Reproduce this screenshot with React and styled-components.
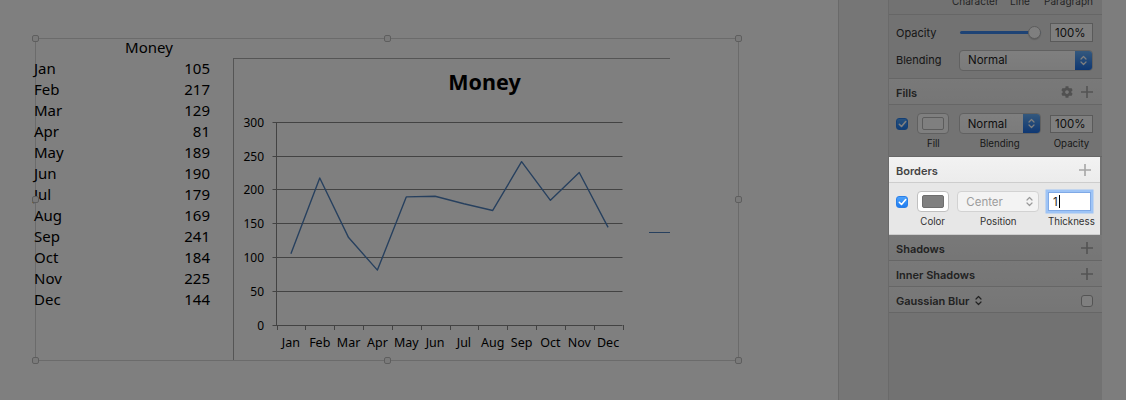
import React from "react";
import styled, { createGlobalStyle } from "styled-components";
import { FaCog } from "react-icons/fa";

const GlobalStyle = createGlobalStyle`
  html, body {
    margin: 0;
    padding: 0;
    overflow: hidden;
  }
  body {
    font-family: Inter, "Noto Sans", sans-serif;
  }
`;

const months = ["Jan", "Feb", "Mar", "Apr", "May", "Jun", "Jul", "Aug", "Sep", "Oct", "Nov", "Dec"];
const money = [105, 217, 129, 81, 189, 190, 179, 169, 241, 184, 225, 144];

const Screen = styled.div`
  display: flex;
  width: 1126px;
  height: 400px;
  overflow: hidden;
  background: #fff;
`;

/* ---------- canvas ---------- */

const Canvas = styled.div`
  flex: 0 0 839px;
  box-sizing: border-box;
  padding: 38px 0 0 35px;
  background: #fff;
  border-right: 1px solid #d4d4d4;
`;

const Frame = styled.div`
  position: relative;
  box-sizing: border-box;
  width: 704px;
  height: 323px;
  border: 1px solid #d6d6d6;
  display: flex;
  align-items: flex-start;
`;

const Handle = styled.span`
  position: absolute;
  width: 7px;
  height: 7px;
  box-sizing: border-box;
  border-radius: 2px;
  background: #f4f4f4;
  border: 1px solid #bdbdbd;
  left: ${(p) => (p.$x === "start" ? "-4px" : p.$x === "mid" ? "calc(50% - 3.5px)" : "auto")};
  right: ${(p) => (p.$x === "end" ? "-4px" : "auto")};
  top: ${(p) => (p.$y === "start" ? "-4px" : p.$y === "mid" ? "calc(50% - 3.5px)" : "auto")};
  bottom: ${(p) => (p.$y === "end" ? "-4px" : "auto")};
`;

const Sheet = styled.div`
  margin: -3px 0 0 -2px;
  width: 176px;
  display: grid;
  grid-template-columns: 54px 122px;
  grid-auto-rows: 21px;
  align-items: center;
  font-family: "Noto Sans", sans-serif;
  font-size: 15px;
  color: #000;
`;

const SheetHead = styled.div`
  grid-column: 2;
  text-align: center;
`;

const Cell = styled.div`
  text-align: ${(p) => (p.$num ? "right" : "left")};
  white-space: nowrap;
`;

const ChartBox = styled.div`
  margin: 19px 0 0 23px;
  align-self: stretch;
  box-sizing: border-box;
  width: 437px;
  border-top: 1px solid #aaaaaa;
  border-left: 1px solid #aaaaaa;
`;

const X0 = 42.5;
const X1 = 388.5;
const CW = (X1 - X0) / 12;
const yOf = (v) => 266 - (v * 203.3) / 300;

const LineChart = () => {
  const points = money.map((v, i) => `${X0 + (i + 0.5) * CW},${yOf(v)}`).join(" ");
  return (
    <svg width="436" height="302" viewBox="0 0 436 302" fontFamily="'Noto Sans', sans-serif">
      <text x="250.5" y="31" textAnchor="middle" fontSize="21.5" fontWeight="700" fill="#000">
        Money
      </text>
      {[0, 50, 100, 150, 200, 250, 300].map((v) => {
        const y = Math.round(yOf(v)) + 0.5;
        return (
          <g key={v}>
            <line x1={X0 - 4} x2={X1} y1={y} y2={y} stroke="#868686" strokeWidth="1" />
            <text x="30" y={y + 4.3} textAnchor="end" fontSize="12" fill="#000">
              {v}
            </text>
          </g>
        );
      })}
      <line x1={X0} x2={X0} y1={Math.round(yOf(300)) + 0.5} y2={266.5} stroke="#868686" />
      {Array.from({ length: 13 }, (_, i) => {
        const x = Math.round(X0 + i * CW) + 0.5;
        return <line key={i} x1={x} x2={x} y1="266" y2="271" stroke="#868686" />;
      })}
      {months.map((m, i) => (
        <text key={m} x={X0 + (i + 0.5) * CW} y="287.5" textAnchor="middle" fontSize="12.5" fill="#000">
          {m}
        </text>
      ))}
      <polyline points={points} fill="none" stroke="#4f81bd" strokeWidth="1.4" strokeLinejoin="round" />
      <line x1="415" x2="436" y1="173.5" y2="173.5" stroke="#4f81bd" strokeWidth="1" />
    </svg>
  );
};

/* ---------- inspector ---------- */

const Gutter = styled.div`
  flex: 0 0 49px;
  background: #ececec;
`;

const Inspector = styled.div`
  flex: 0 0 214px;
  box-sizing: border-box;
  background: #e4e4e4;
  border-left: 1px solid #d4d4d4;
  color: #2e2e2e;
  font-size: 11px;
`;

const RightEdge = styled.div`
  flex: 1;
  background: #fbfbfb;
`;

const Tabs = styled.div`
  height: 14px;
  border-bottom: 1px solid #cdcdcd;
  padding-left: 63px;
  display: grid;
  grid-template-columns: 44px 44px 43px;
  column-gap: 2px;
  overflow: hidden;
`;

const TabLabel = styled.span`
  margin-top: -6px;
  font-size: 10px;
  line-height: 14px;
  color: #4a4a4a;
  text-align: center;
  white-space: nowrap;
`;

const LayerBlock = styled.div`
  display: grid;
  grid-template-columns: 63px 1fr;
  grid-template-rows: 19px 20px;
  row-gap: 8px;
  align-items: center;
  padding: 8px 9px 8px 7px;
  border-bottom: 1px solid #cdcdcd;
`;

const SliderRow = styled.div`
  display: flex;
  align-items: center;
  gap: 9px;
`;

const Slider = styled.div`
  position: relative;
  flex: 1;
  height: 3px;
  margin-left: 1px;
  border-radius: 2px;
  background: #3d86ea;
`;

const Knob = styled.span`
  position: absolute;
  right: 0;
  top: -5px;
  width: 13px;
  height: 13px;
  box-sizing: border-box;
  border-radius: 50%;
  background: #fff;
  border: 1px solid #b8b8b8;
  box-shadow: 0 1px 1px rgba(0, 0, 0, 0.15);
`;

const TextField = styled.div`
  box-sizing: border-box;
  width: ${(p) => p.$w || 43}px;
  height: ${(p) => p.$h || 19}px;
  padding-left: 4px;
  display: flex;
  align-items: center;
  background: #fff;
  border: 1px solid ${(p) => (p.$focus ? "#7fa9e6" : "#b5b5b5")};
  box-shadow: ${(p) => (p.$focus ? "0 0 0 2.5px #9ec4f6" : "none")};
  color: #1e1e1e;
  font-size: 11.5px;
`;

const Caret = styled.span`
  width: 1px;
  height: 13px;
  margin-left: 1px;
  background: #000;
`;

const Select = styled.div`
  box-sizing: border-box;
  width: ${(p) => (p.$w ? `${p.$w}px` : "100%")};
  height: 21px;
  display: flex;
  align-items: center;
  border-radius: 4px;
  border: 1px solid ${(p) => (p.$muted ? "#d2d2d2" : "#c2c2c2")};
  background: ${(p) => (p.$muted ? "#f3f3f3" : "linear-gradient(#ffffff, #f6f6f6)")};
  color: ${(p) => (p.$muted ? "#9d9d9d" : "#1e1e1e")};
  font-size: 11.5px;
  overflow: hidden;
`;

const SelectText = styled.span`
  flex: 1;
  padding-left: 8px;
`;

const Stepper = styled.span`
  align-self: stretch;
  width: 17px;
  display: flex;
  align-items: center;
  justify-content: center;
  background: ${(p) => (p.$muted ? "transparent" : "linear-gradient(#69b1fb, #1c6fe6)")};
`;

const SectionHeader = styled.div`
  height: 25px;
  box-sizing: border-box;
  padding: 2px 9px 0 7px;
  display: flex;
  align-items: center;
  background: linear-gradient(#f2f2f2, #ececec);
  border-bottom: 1px solid #cdcdcd;
  font-weight: 600;
  font-size: 11px;
  color: #444;
  height: 26px;
`;

const HeaderTitle = styled.span`
  flex: 1;
  display: flex;
  align-items: center;
  gap: 6px;
`;

const HeaderTools = styled.div`
  display: flex;
  align-items: center;
  gap: 8px;
  margin-top: -2px;
  color: #a2a2a2;
`;

const ControlBlock = styled.div`
  display: grid;
  grid-template-columns: 12px 32px 82px 43px;
  grid-template-rows: 21px 12px;
  justify-content: space-between;
  row-gap: 4px;
  align-items: center;
  padding: 8px 9px 6px 7px;
  background: #e7e7e7;
  border-bottom: 1px solid #cdcdcd;
`;

const SmallLabel = styled.span`
  font-size: 9.7px;
  line-height: 12px;
  color: #333;
  text-align: center;
  white-space: nowrap;
`;

const Check = styled.span`
  box-sizing: border-box;
  width: 12px;
  height: 12px;
  border-radius: 3px;
  display: flex;
  align-items: center;
  justify-content: center;
  background: ${(p) => (p.$on ? "linear-gradient(#4da2fb, #1f7cf0)" : "#fff")};
  border: 1px solid ${(p) => (p.$on ? "#2a7fe8" : "#a9a9a9")};
`;

const Well = styled.div`
  box-sizing: border-box;
  width: 32px;
  height: 21px;
  padding: 3px 4px;
  border-radius: 4px;
  background: #fff;
  border: 1px solid #c0c0c0;
`;

const Swatch = styled.div`
  height: 100%;
  box-sizing: border-box;
  border-radius: 2px;
  background: ${(p) => p.$color};
  border: 1px solid ${(p) => (p.$color === "#fff" ? "#b9b9b9" : "#6e6e6e")};
`;

const Highlight = styled.div`
  position: relative;
  z-index: 10;
  margin-right: 2px;
  box-shadow: 0 0 0 3000px rgba(0, 0, 0, 0.5);
`;

const Chevrons = ({ color = "#fff" }) => (
  <svg width="7" height="11" viewBox="0 0 7 11" fill="none" stroke={color} strokeWidth="1.2" strokeLinecap="round" strokeLinejoin="round">
    <polyline points="1,4 3.5,1.5 6,4" />
    <polyline points="1,7 3.5,9.5 6,7" />
  </svg>
);

const PlusIcon = () => (
  <svg width="12" height="12" viewBox="0 0 12 12">
    <path d="M6 0v12M0 6h12" stroke="#a6a6a6" strokeWidth="1.6" />
  </svg>
);

const Tick = () => (
  <svg width="9" height="8" viewBox="0 0 9 8" fill="none" stroke="#fff" strokeWidth="1.6" strokeLinecap="round" strokeLinejoin="round">
    <polyline points="1.3,4.3 3.5,6.5 7.7,1.5" />
  </svg>
);

const handles = [
  ["start", "start"], ["mid", "start"], ["end", "start"],
  ["start", "mid"], ["end", "mid"],
  ["start", "end"], ["mid", "end"], ["end", "end"],
];

export default function App() {
  return (
    <>
      <GlobalStyle />
      <Screen>
        <Canvas>
          <Frame>
            <Sheet>
              <SheetHead>Money</SheetHead>
              {months.map((m, i) => (
                <React.Fragment key={m}>
                  <Cell>{m}</Cell>
                  <Cell $num>{money[i]}</Cell>
                </React.Fragment>
              ))}
            </Sheet>
            <ChartBox>
              <LineChart />
            </ChartBox>
            {handles.map(([x, y]) => (
              <Handle key={x + y} $x={x} $y={y} />
            ))}
          </Frame>
        </Canvas>

        <Gutter />

        <Inspector>
          <Tabs>
            <TabLabel>Character</TabLabel>
            <TabLabel>Line</TabLabel>
            <TabLabel>Paragraph</TabLabel>
          </Tabs>

          <LayerBlock>
            <span>Opacity</span>
            <SliderRow>
              <Slider>
                <Knob />
              </Slider>
              <TextField>100%</TextField>
            </SliderRow>
            <span>Blending</span>
            <Select>
              <SelectText>Normal</SelectText>
              <Stepper>
                <Chevrons />
              </Stepper>
            </Select>
          </LayerBlock>

          <SectionHeader>
            <HeaderTitle>Fills</HeaderTitle>
            <HeaderTools>
              <FaCog size={12} />
              <PlusIcon />
            </HeaderTools>
          </SectionHeader>
          <ControlBlock>
            <Check $on>
              <Tick />
            </Check>
            <Well>
              <Swatch $color="#fff" />
            </Well>
            <Select $w={82}>
              <SelectText>Normal</SelectText>
              <Stepper>
                <Chevrons />
              </Stepper>
            </Select>
            <TextField $h={18}>100%</TextField>
            <span />
            <SmallLabel>Fill</SmallLabel>
            <SmallLabel>Blending</SmallLabel>
            <SmallLabel>Opacity</SmallLabel>
          </ControlBlock>

          <Highlight>
            <SectionHeader>
              <HeaderTitle>Borders</HeaderTitle>
              <HeaderTools>
                <PlusIcon />
              </HeaderTools>
            </SectionHeader>
            <ControlBlock>
              <Check $on>
                <Tick />
              </Check>
              <Well>
                <Swatch $color="#808080" />
              </Well>
              <Select $w={82} $muted>
                <SelectText>Center</SelectText>
                <Stepper $muted>
                  <Chevrons color="#9a9a9a" />
                </Stepper>
              </Select>
              <TextField $focus $h={19}>
                1
                <Caret />
              </TextField>
              <span />
              <SmallLabel>Color</SmallLabel>
              <SmallLabel>Position</SmallLabel>
              <SmallLabel>Thickness</SmallLabel>
            </ControlBlock>
          </Highlight>

          <SectionHeader>
            <HeaderTitle>Shadows</HeaderTitle>
            <HeaderTools>
              <PlusIcon />
            </HeaderTools>
          </SectionHeader>
          <SectionHeader>
            <HeaderTitle>Inner Shadows</HeaderTitle>
            <HeaderTools>
              <PlusIcon />
            </HeaderTools>
          </SectionHeader>
          <SectionHeader>
            <HeaderTitle>
              Gaussian Blur
              <Chevrons color="#444" />
            </HeaderTitle>
            <Check />
          </SectionHeader>
        </Inspector>

        <RightEdge />
      </Screen>
    </>
  );
}
